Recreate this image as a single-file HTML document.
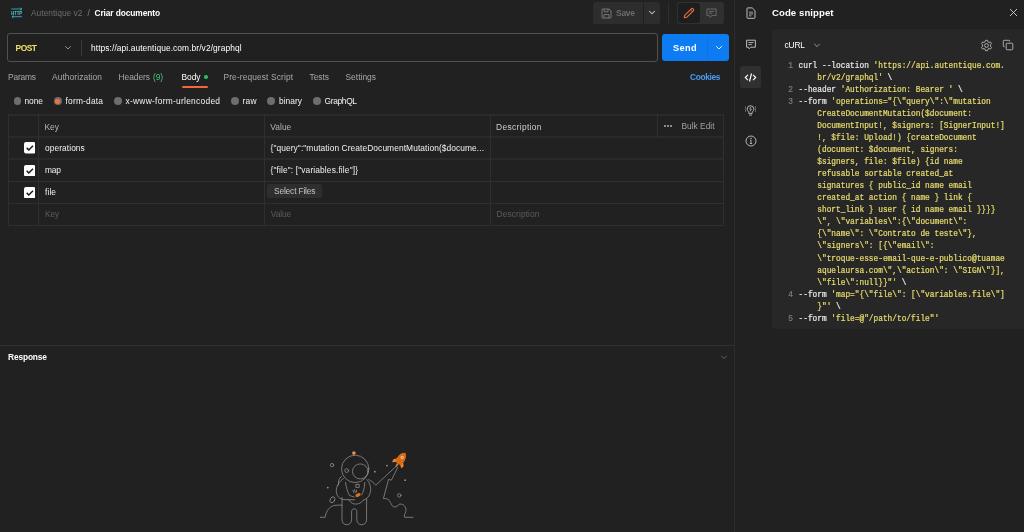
<!DOCTYPE html>
<html><head><meta charset="utf-8"><title>Criar documento</title>
<style>
*{box-sizing:border-box;margin:0;padding:0}
html,body{width:1024px;height:532px;overflow:hidden;background:#212121;font-family:"Liberation Sans",sans-serif;color:#fff}
.a{position:absolute}
#w{position:absolute;left:0;top:0;width:1024px;height:532px;will-change:transform}
.t{position:absolute;white-space:nowrap;line-height:12px;height:12px}
.c{position:absolute;white-space:pre;font-family:"Liberation Mono",monospace;font-size:7.82px;line-height:12px;height:12px;color:#e6e6e6;transform:scaleY(1.1);transform-origin:0 8.5px;-webkit-text-stroke:0.22px currentColor}
.c b{font-weight:normal;color:#e6da6c;-webkit-text-stroke:0.22px #e6da6c}
.n{color:#7c7c7c}
</style></head><body><div id="w">
<div class="a" style="left:734px;top:0px;width:1px;height:532px;background:#2c2c2c;"></div>
<div class="a" style="left:593px;top:2px;width:50px;height:21.5px;background:#2d2d2d;border-radius:2.5px 0 0 2.5px"></div>
<div class="a" style="left:644px;top:2px;width:16px;height:21.5px;background:#2d2d2d;border-radius:0 2.5px 2.5px 0"></div>
<div class="a" style="left:668px;top:2.5px;width:1px;height:20.5px;background:#303030;"></div>
<div class="a" style="left:677px;top:2px;width:47px;height:21.5px;background:#303030;border-radius:2.5px"></div>
<div class="a" style="left:678px;top:3px;width:21.5px;height:19.5px;background:#1e1e1e;border-radius:2.5px"></div>
<div class="a" style="left:7px;top:33px;width:651px;height:28.5px;background:#202020;border:1px solid #515151;border-radius:3px"></div>
<div class="a" style="left:81px;top:39.5px;width:1px;height:16px;background:#3a3a3a;"></div>
<div class="a" style="left:662px;top:34px;width:67px;height:27px;background:#0d7bf2;border-radius:3px"></div>
<div class="a" style="left:707px;top:34px;width:1px;height:27px;background:#0c75e6;"></div>
<div class="a" style="left:203.5px;top:75px;width:4px;height:4px;background:#1fc862;border-radius:50%"></div>
<div class="a" style="left:181.5px;top:86px;width:26.5px;height:2px;background:#ee6a3a;border-radius:1px"></div>
<div class="a" style="left:13.5px;top:97.4px;width:7.8px;height:7.8px;background:#6e6e6e;border-radius:50%"></div>
<div class="a" style="left:114px;top:97.4px;width:7.8px;height:7.8px;background:#6e6e6e;border-radius:50%"></div>
<div class="a" style="left:231px;top:97.4px;width:7.8px;height:7.8px;background:#6e6e6e;border-radius:50%"></div>
<div class="a" style="left:267.3px;top:97.4px;width:7.8px;height:7.8px;background:#6e6e6e;border-radius:50%"></div>
<div class="a" style="left:313px;top:97.4px;width:7.8px;height:7.8px;background:#6e6e6e;border-radius:50%"></div>
<div class="a" style="left:54px;top:97.4px;width:7.8px;height:7.8px;background:#6e6e6e;border-radius:50%"></div>
<div class="a" style="left:55.4px;top:98.8px;width:5px;height:5px;background:#f0703c;border-radius:50%"></div>
<div class="a" style="left:8px;top:114px;width:716px;height:2px;background:#2a2a2a;"></div>
<div class="a" style="left:8px;top:136px;width:716px;height:2px;background:#2a2a2a;"></div>
<div class="a" style="left:8px;top:158px;width:716px;height:2px;background:#2a2a2a;"></div>
<div class="a" style="left:8px;top:181px;width:716px;height:1px;background:#303030;"></div>
<div class="a" style="left:8px;top:203px;width:716px;height:1px;background:#303030;"></div>
<div class="a" style="left:8px;top:225px;width:716px;height:1px;background:#2e2e2e;"></div>
<div class="a" style="left:8px;top:114px;width:1px;height:112px;background:#2f2f2f;"></div>
<div class="a" style="left:723px;top:114px;width:1px;height:112px;background:#2f2f2f;"></div>
<div class="a" style="left:38px;top:114px;width:1px;height:112px;background:#2f2f2f;"></div>
<div class="a" style="left:264px;top:114px;width:1px;height:112px;background:#2f2f2f;"></div>
<div class="a" style="left:490px;top:114px;width:1px;height:112px;background:#2f2f2f;"></div>
<div class="a" style="left:657px;top:114px;width:1px;height:23px;background:#2f2f2f;"></div>
<svg class="a" style="left:23.7px;top:142.3px" width="11.5" height="11.5" viewBox="0 0 11.5 11.5"><rect width="11.5" height="11.5" rx="2" fill="#fff"/><path d="M2.7 5.9 L4.8 8 L9 3.7" fill="none" stroke="#1a1a1a" stroke-width="1.5"/></svg>
<svg class="a" style="left:23.7px;top:164.5px" width="11.5" height="11.5" viewBox="0 0 11.5 11.5"><rect width="11.5" height="11.5" rx="2" fill="#fff"/><path d="M2.7 5.9 L4.8 8 L9 3.7" fill="none" stroke="#1a1a1a" stroke-width="1.5"/></svg>
<svg class="a" style="left:23.7px;top:186.7px" width="11.5" height="11.5" viewBox="0 0 11.5 11.5"><rect width="11.5" height="11.5" rx="2" fill="#fff"/><path d="M2.7 5.9 L4.8 8 L9 3.7" fill="none" stroke="#1a1a1a" stroke-width="1.5"/></svg>
<div class="a" style="left:267.3px;top:184.3px;width:54.8px;height:13.8px;background:#2e2e2e;border-radius:2.5px"></div>
<div class="a" style="left:664.3px;top:125.3px;width:1.5px;height:1.5px;background:#a0a0a0;border-radius:50%"></div>
<div class="a" style="left:667.3px;top:125.3px;width:1.5px;height:1.5px;background:#a0a0a0;border-radius:50%"></div>
<div class="a" style="left:670.3px;top:125.3px;width:1.5px;height:1.5px;background:#a0a0a0;border-radius:50%"></div>
<div class="a" style="left:0px;top:344.5px;width:734px;height:1px;background:#303030;"></div>
<div class="a" style="left:739.7px;top:66.2px;width:21.6px;height:21.8px;background:#303030;border-radius:2.5px"></div>
<div class="a" style="left:772px;top:29.3px;width:252px;height:299.4px;background:#272727;border-radius:3px 0 0 3px"></div>
<div class="t" style="left:31px;top:7.00px;color:#6e6e6e;font-size:8.4px;font-weight:normal;letter-spacing:0.022px">Autentique v2</div>
<div class="t" style="left:87.5px;top:7.00px;color:#8c8c8c;font-size:8.4px;font-weight:normal;letter-spacing:0.000px">/</div>
<div class="t" style="left:94.5px;top:7.00px;color:#ffffff;font-size:8.4px;font-weight:600;letter-spacing:-0.108px">Criar documento</div>
<div class="t" style="left:616px;top:7.00px;color:#6b6b6b;font-size:8.4px;font-weight:600;letter-spacing:-0.188px">Save</div>
<div class="t" style="left:15.5px;top:42.00px;color:#f2e06b;font-size:8.4px;font-weight:bold;letter-spacing:-0.438px">POST</div>
<div class="t" style="left:91px;top:42.00px;color:#ffffff;font-size:8.4px;font-weight:normal;letter-spacing:0.087px">https://api.autentique.com.br/v2/graphql</div>
<div class="t" style="left:673px;top:42.00px;color:#ffffff;font-size:9.2px;font-weight:bold;letter-spacing:0.344px">Send</div>
<div class="t" style="left:8px;top:71.00px;color:#a8a8a8;font-size:8.4px;font-weight:normal;letter-spacing:-0.172px">Params</div>
<div class="t" style="left:52px;top:71.00px;color:#a8a8a8;font-size:8.4px;font-weight:normal;letter-spacing:0.092px">Authorization</div>
<div class="t" style="left:118.5px;top:71.00px;color:#a8a8a8;font-size:8.4px;font-weight:normal;letter-spacing:-0.026px">Headers</div>
<div class="t" style="left:153px;top:71.00px;color:#44c979;font-size:8.4px;font-weight:normal;letter-spacing:-0.125px">(9)</div>
<div class="t" style="left:181.5px;top:71.00px;color:#ffffff;font-size:8.4px;font-weight:normal;letter-spacing:-0.031px">Body</div>
<div class="t" style="left:223.5px;top:71.00px;color:#a8a8a8;font-size:8.4px;font-weight:normal;letter-spacing:0.118px">Pre-request Script</div>
<div class="t" style="left:309.5px;top:71.00px;color:#a8a8a8;font-size:8.4px;font-weight:normal;letter-spacing:-0.012px">Tests</div>
<div class="t" style="left:345.5px;top:71.00px;color:#a8a8a8;font-size:8.4px;font-weight:normal;letter-spacing:0.033px">Settings</div>
<div class="t" style="left:690px;top:71.00px;color:#4a9df0;font-size:8.4px;font-weight:600;letter-spacing:-0.349px">Cookies</div>
<div class="t" style="left:24.5px;top:95.00px;color:#f2f2f2;font-size:8.4px;font-weight:normal;letter-spacing:-0.047px">none</div>
<div class="t" style="left:65.5px;top:95.00px;color:#f2f2f2;font-size:8.4px;font-weight:normal;letter-spacing:0.207px">form-data</div>
<div class="t" style="left:125.5px;top:95.00px;color:#f2f2f2;font-size:8.4px;font-weight:normal;letter-spacing:0.280px">x-www-form-urlencoded</div>
<div class="t" style="left:242.5px;top:95.00px;color:#f2f2f2;font-size:8.4px;font-weight:normal;letter-spacing:0.250px">raw</div>
<div class="t" style="left:279px;top:95.00px;color:#f2f2f2;font-size:8.4px;font-weight:normal;letter-spacing:0.037px">binary</div>
<div class="t" style="left:324.5px;top:95.00px;color:#f2f2f2;font-size:8.4px;font-weight:normal;letter-spacing:-0.326px">GraphQL</div>
<div class="t" style="left:44.5px;top:121.00px;color:#b4b4b4;font-size:8.4px;font-weight:normal;letter-spacing:0.031px">Key</div>
<div class="t" style="left:270.3px;top:121.00px;color:#b4b4b4;font-size:8.4px;font-weight:normal;letter-spacing:0.047px">Value</div>
<div class="t" style="left:496px;top:121.00px;color:#cdcdcd;font-size:8.4px;font-weight:normal;letter-spacing:0.359px">Description</div>
<div class="t" style="left:681.5px;top:120.00px;color:#a0a0a0;font-size:8.4px;font-weight:normal;letter-spacing:-0.008px">Bulk Edit</div>
<div class="t" style="left:45px;top:142.00px;color:#f0f0f0;font-size:8.4px;font-weight:normal;letter-spacing:0.075px">operations</div>
<div class="t" style="left:270.5px;top:142.00px;color:#f0f0f0;font-size:8.4px;font-weight:normal;letter-spacing:0.086px">{"query":"mutation CreateDocumentMutation($docume...</div>
<div class="t" style="left:45px;top:164.00px;color:#f0f0f0;font-size:8.4px;font-weight:normal;letter-spacing:-0.148px">map</div>
<div class="t" style="left:270.5px;top:164.00px;color:#f0f0f0;font-size:8.4px;font-weight:normal;letter-spacing:0.127px">{"file": ["variables.file"]}</div>
<div class="t" style="left:45px;top:186.00px;color:#f0f0f0;font-size:8.4px;font-weight:normal;letter-spacing:0.094px">file</div>
<div class="t" style="left:274px;top:185.00px;color:#c4c4c4;font-size:8.4px;font-weight:normal;letter-spacing:-0.163px">Select Files</div>
<div class="t" style="left:45px;top:208.00px;color:#5c5c5c;font-size:8.4px;font-weight:normal;letter-spacing:-0.069px">Key</div>
<div class="t" style="left:270.8px;top:208.00px;color:#5c5c5c;font-size:8.4px;font-weight:normal;letter-spacing:-0.078px">Value</div>
<div class="t" style="left:496.5px;top:208.00px;color:#5c5c5c;font-size:8.4px;font-weight:normal;letter-spacing:0.109px">Description</div>
<div class="t" style="left:8px;top:351.00px;color:#ffffff;font-size:8.4px;font-weight:600;letter-spacing:-0.147px">Response</div>
<div class="t" style="left:772px;top:6.50px;color:#ffffff;font-size:9.6px;font-weight:bold;letter-spacing:0.067px">Code snippet</div>
<div class="t" style="left:784.5px;top:39.00px;color:#ffffff;font-size:8.4px;font-weight:normal;letter-spacing:-0.151px">cURL</div>
<!-- HTTP icon -->
<svg class="a" style="left:10px;top:6px" width="14" height="14" viewBox="0 0 14 14">
<g fill="none" stroke="#40bdd0" stroke-width="0.8">
<path d="M1.4 3H11.6M10.2 1.8L11.9 3L10.2 4.2"/>
<path d="M12 10.7H2.2M3.6 9.5L1.9 10.7L3.6 11.9"/>
</g>
<text x="6.7" y="9.05" text-anchor="middle" font-family="Liberation Sans, sans-serif" font-weight="bold" font-size="6.1" fill="#4fd0e4" textLength="11" lengthAdjust="spacingAndGlyphs">HTTP</text>
</svg>
<!-- save icon -->
<svg class="a" style="left:601px;top:7.5px" width="11" height="11" viewBox="0 0 11 11">
<g fill="none" stroke="#767676" stroke-width="1" stroke-linejoin="round">
<path d="M1 1.5a.5.5 0 0 1 .5-.5H8L10 3V9.5a.5.5 0 0 1-.5.5H1.5a.5.5 0 0 1-.5-.5Z"/>
<path d="M3.2 1.2V3.8H7V1.2"/>
<path d="M3 10V6.6H8V10"/>
</g></svg>
<!-- save chevron -->
<svg class="a" style="left:648px;top:9px" width="8" height="7" viewBox="0 0 8 7"><path d="M1.2 2L4 4.8L6.8 2" fill="none" stroke="#c4c4c4" stroke-width="1.05"/></svg>
<!-- pencil -->
<svg class="a" style="left:683px;top:7px" width="12" height="12" viewBox="0 0 12 12">
<g fill="none" stroke="#ea6d3c" stroke-width="1.15" stroke-linejoin="round" stroke-linecap="round">
<path d="M1.3 10.7L1.7 8.4L8.3 1.8a1.2 1.2 0 0 1 1.7 0l.3.3a1.2 1.2 0 0 1 0 1.7L3.7 10.3Z"/>
<path d="M7.5 2.8L9.3 4.6" stroke-width="0.9"/>
</g></svg>
<!-- comment (top) -->
<svg class="a" style="left:705.5px;top:7.5px" width="11" height="11" viewBox="0 0 11 11">
<g fill="none" stroke="#707070" stroke-width="0.9" stroke-linejoin="round">
<path d="M.9 1H10.1V7.6H5.6L4.4 9.4L3.4 7.6H.9Z"/>
<path d="M2.8 3.4H8.2M2.8 5.3H6.2"/>
</g></svg>
<!-- url chevron -->
<svg class="a" style="left:63.5px;top:44px" width="8" height="7" viewBox="0 0 8 7"><path d="M1.2 2.2L4 5L6.8 2.2" fill="none" stroke="#a0a0a0" stroke-width="0.9"/></svg>
<!-- send chevron -->
<svg class="a" style="left:714.5px;top:44px" width="8" height="7" viewBox="0 0 8 7"><path d="M1.2 2.2L4 5L6.8 2.2" fill="none" stroke="#ffffff" stroke-width="0.9"/></svg>
<!-- response chevron -->
<svg class="a" style="left:720px;top:353.5px" width="8" height="7" viewBox="0 0 8 7"><path d="M1.2 1.8L4 4.6L6.8 1.8" fill="none" stroke="#6b6b6b" stroke-width="0.9"/></svg>
<!-- rail: doc -->
<svg class="a" style="left:745px;top:6.5px" width="11" height="12" viewBox="0 0 11 12">
<g fill="none" stroke="#bcbcbc" stroke-width="1" stroke-linejoin="round">
<path d="M2 1.7a.8.8 0 0 1 .8-.8H7.2L10 3.7V10.5a.8.8 0 0 1-.8.8H2.8a.8.8 0 0 1-.8-.8Z"/>
<path d="M4 5.2H8M4 7H8M4 8.8H6.4" stroke-width="0.8"/>
</g></svg>
<!-- rail: comment -->
<svg class="a" style="left:745px;top:39px" width="11" height="12" viewBox="0 0 11 12">
<g fill="none" stroke="#bcbcbc" stroke-width="1" stroke-linejoin="round">
<path d="M1.6 1.2H10.4V8.2H5.6L4.2 9.8L3.4 8.2H1.6Z"/>
<path d="M3.4 3.6H8.6M3.4 5.6H6.8" stroke-width="0.9"/>
</g></svg>
<!-- rail: code -->
<svg class="a" style="left:744px;top:71.8px" width="13" height="11" viewBox="0 0 13 11">
<g fill="none" stroke="#ffffff" stroke-width="1.15" stroke-linejoin="miter">
<path d="M3.9 2.8L1.3 5.5L3.9 8.2"/>
<path d="M9.1 2.8L11.7 5.5L9.1 8.2"/>
<path d="M7.5 1.5L5.5 9.5"/>
</g></svg>
<!-- rail: bulb -->
<svg class="a" style="left:744px;top:103px" width="13" height="13" viewBox="0 0 13 13">
<g fill="none" stroke="#bcbcbc" stroke-width="0.95" stroke-linejoin="round">
<path d="M4.9 9.2C3.7 8.3 3.2 7.2 3.2 6A3.3 3.3 0 0 1 9.8 6C9.8 7.2 9.3 8.3 8.1 9.2V10.6H4.9Z"/>
<path d="M5.2 12.1H7.8"/>
<path d="M6.9 3.9L5.7 6.2H7.3L6.1 8.5" stroke-width="0.8"/>
<path d="M1 3.9L2 4.2M.9 6H1.9M1 8.1L2 7.8M12 3.9L11 4.2M12.1 6H11.1M12 8.1L11 7.8" stroke-width="0.8"/>
</g></svg>
<!-- rail: info -->
<svg class="a" style="left:744.6px;top:135.2px" width="12" height="12" viewBox="0 0 12 12">
<g fill="none" stroke="#bcbcbc" stroke-width="0.95">
<circle cx="6" cy="6" r="5"/>
<path d="M6 5.2V8.4M4.9 8.5H7.1M5.1 5.3H6" stroke-width="0.9"/>
</g><circle cx="6" cy="3.4" r="0.75" fill="#bcbcbc"/></svg>
<!-- close X -->
<svg class="a" style="left:1009px;top:8.3px" width="9" height="9" viewBox="0 0 9 9"><path d="M1 1L8 8M8 1L1 8" fill="none" stroke="#c8c8c8" stroke-width="0.95"/></svg>
<!-- cURL chevron -->
<svg class="a" style="left:813px;top:41.7px" width="8" height="7" viewBox="0 0 8 7"><path d="M1.2 1.8L4 4.6L6.8 1.8" fill="none" stroke="#a0a0a0" stroke-width="0.9"/></svg>
<!-- gear -->
<svg class="a" style="left:980px;top:38.5px" width="13" height="13" viewBox="0 0 13 13">
<g fill="none" stroke="#b8b8b8" stroke-width="0.9" stroke-linejoin="round">
<path d="M5.5 1H7.5L7.9 2.5L9 3.1L10.5 2.7L11.5 4.4L10.4 5.5V6.9L11.5 8L10.5 9.7L9 9.3L7.9 9.9L7.5 11.4H5.5L5.1 9.9L4 9.3L2.5 9.7L1.5 8L2.6 6.9V5.5L1.5 4.4L2.5 2.7L4 3.1L5.1 2.5Z" transform="translate(0 0.3)"/>
<circle cx="6.5" cy="6.5" r="1.9"/>
</g></svg>
<!-- copy -->
<svg class="a" style="left:1002px;top:39px" width="12" height="12" viewBox="0 0 12 12">
<g fill="none" stroke="#b8b8b8" stroke-width="0.9" stroke-linejoin="round">
<rect x="4.2" y="4.2" width="6.6" height="6.6" rx="1"/>
<path d="M2.6 7.8H2.2a.9.9 0 0 1-.9-.9V2.2a.9.9 0 0 1 .9-.9H6.9a.9.9 0 0 1 .9.9V2.6"/>
</g></svg>

<div class="c n" style="left:788.2px;top:59.5px">1</div>
<div class="c" style="left:798.5px;top:59.5px">curl --location <b>'https://api.autentique.com.</b></div>
<div class="c" style="left:798.5px;top:71.56px"><b>    br/v2/graphql'</b> \</div>
<div class="c n" style="left:788.2px;top:83.63px">2</div>
<div class="c" style="left:798.5px;top:83.63px">--header <b>'Authorization: Bearer '</b> \</div>
<div class="c n" style="left:788.2px;top:95.69px">3</div>
<div class="c" style="left:798.5px;top:95.69px">--form <b>'operations="{\"query\":\"mutation </b></div>
<div class="c" style="left:798.5px;top:107.76px"><b>    CreateDocumentMutation($document: </b></div>
<div class="c" style="left:798.5px;top:119.82px"><b>    DocumentInput!, $signers: [SignerInput!]</b></div>
<div class="c" style="left:798.5px;top:131.88px"><b>    !, $file: Upload!) {createDocument</b></div>
<div class="c" style="left:798.5px;top:143.95px"><b>    (document: $document, signers: </b></div>
<div class="c" style="left:798.5px;top:156.01px"><b>    $signers, file: $file) {id name </b></div>
<div class="c" style="left:798.5px;top:168.08px"><b>    refusable sortable created_at </b></div>
<div class="c" style="left:798.5px;top:180.14px"><b>    signatures { public_id name email </b></div>
<div class="c" style="left:798.5px;top:192.2px"><b>    created_at action { name } link { </b></div>
<div class="c" style="left:798.5px;top:204.27px"><b>    short_link } user { id name email }}}}</b></div>
<div class="c" style="left:798.5px;top:216.33px"><b>    \", \"variables\":{\"document\":</b></div>
<div class="c" style="left:798.5px;top:228.4px"><b>    {\"name\": \"Contrato de teste\"},</b></div>
<div class="c" style="left:798.5px;top:240.46px"><b>    \"signers\": [{\"email\": </b></div>
<div class="c" style="left:798.5px;top:252.52px"><b>    \"troque-esse-email-que-e-publico@tuamae</b></div>
<div class="c" style="left:798.5px;top:264.59px"><b>    aquelaursa.com\",\"action\": \"SIGN\"}],</b></div>
<div class="c" style="left:798.5px;top:276.65px"><b>    \"file\":null}}"'</b> \</div>
<div class="c n" style="left:788.2px;top:288.72px">4</div>
<div class="c" style="left:798.5px;top:288.72px">--form <b>'map="{\"file\": [\"variables.file\"]</b></div>
<div class="c" style="left:798.5px;top:300.78px"><b>    }"'</b> \</div>
<div class="c n" style="left:788.2px;top:312.84px">5</div>
<div class="c" style="left:798.5px;top:312.84px">--form <b>'file=@"/path/to/file"'</b></div>
<!-- astronaut illustration -->
<svg class="a" style="left:310px;top:440px" width="110" height="92" viewBox="310 440 110 92">
<g fill="none" stroke="#949494" stroke-width="0.75" stroke-linecap="round" stroke-linejoin="round">
<path d="M320.4 517.3H325.2C326 511 329.5 505.6 336 505.2C338.5 505 340.5 505 342 505.2"/>
<circle cx="355.2" cy="468.9" r="13.7"/>
<ellipse cx="360.3" cy="471.4" rx="7.8" ry="7.5"/>
<circle cx="346.7" cy="470.6" r="1.9"/>
<path d="M353.9 454.9V455.3"/>
<path d="M343.5 478.5C339 481.5 336 486.5 336.3 491.5C336.6 496 339.5 499.3 344 499.6L354.5 499.8"/>
<path d="M366.8 479.5C370 483 371.2 487.5 370.4 491.8C369.6 496 367 499.4 363.5 500.2"/>
<path d="M342 497.5V519.5C342 526.5 351.6 526.5 351.6 519.5V511.5C351.6 508 356.8 508 356.8 511.5V519.5C356.8 526.5 366.6 526.5 366.6 519.5V499"/>
<path d="M341.5 476.5C339 478 338.2 480.5 338.5 485"/>
<path d="M345.5 482.5C346.5 488 347.5 492 349.5 495.5L354 497"/>
<path d="M364.8 482.5C364.6 488 363.5 492 361.5 495"/>
<path d="M349 499.8C351 504.2 356 505.5 361 502.5L363.5 500.2"/>
<rect x="356.2" y="484.4" width="3" height="3"/>
<path d="M352.8 490.2L354 492.6M354.6 489.6L355.2 492.2M356.6 490.2L356.2 492.4"/>
<path d="M368.8 479.6C371.5 481 374 483 375.8 485.2L396 466.4"/>
<path d="M397.8 467.2L391.4 480.2L388.6 479.4L383.4 498.6C385 498.3 387.8 498.6 389.2 500.4C391.2 503 391.6 507.2 395 507C397.8 506.8 398.2 503.6 401 504C404.8 504.6 406.6 508.4 405.8 511.6C405.2 514 403.4 515.6 404.6 517.3H413"/>
<circle cx="332" cy="465.1" r="1.7"/>
<circle cx="399.3" cy="495.4" r="1.7"/>
<ellipse cx="332.4" cy="499.8" rx="2.2" ry="3.2" transform="rotate(28 332.4 499.8)"/>
</g>
<g fill="#949494">
<circle cx="327.8" cy="487.6" r="0.9"/><circle cx="374.9" cy="471.7" r="0.9"/><circle cx="387" cy="465.6" r="0.9"/><circle cx="405.2" cy="480.2" r="0.9"/>
</g>
<circle cx="353.9" cy="453.1" r="1.8" fill="#f0895c"/>
<ellipse cx="358" cy="495" rx="2.8" ry="1.7" transform="rotate(-25 358 495)" fill="#e0701a"/>
<g transform="translate(400.5 459.8) rotate(34)">
<path d="M0 -8.4C2.2 -7.4 4.2 -4.4 4 -0.4C3.9 1.6 3.4 3.2 2.8 4.6H-2.8C-3.4 3.2 -3.9 1.6 -4 -0.4C-4.2 -4.4 -2.2 -7.4 0 -8.4Z" fill="#d96a12"/>
<path d="M-3.6 0.6L-6.2 3.6L-5.6 6.6L-2.8 4.6Z" fill="#e6853a"/>
<path d="M3.6 0.6L6.2 3.6L5.6 6.6L2.8 4.6Z" fill="#e6853a"/>
<path d="M-0.9 4.6H0.9L0.6 8.2H-0.6Z" fill="#e6853a"/>
<circle cx="0" cy="-3" r="1.6" fill="#d0d0d0"/><circle cx="0" cy="-3" r="0.75" fill="#d96a12"/>
</g>
</svg>

</div></body></html>
